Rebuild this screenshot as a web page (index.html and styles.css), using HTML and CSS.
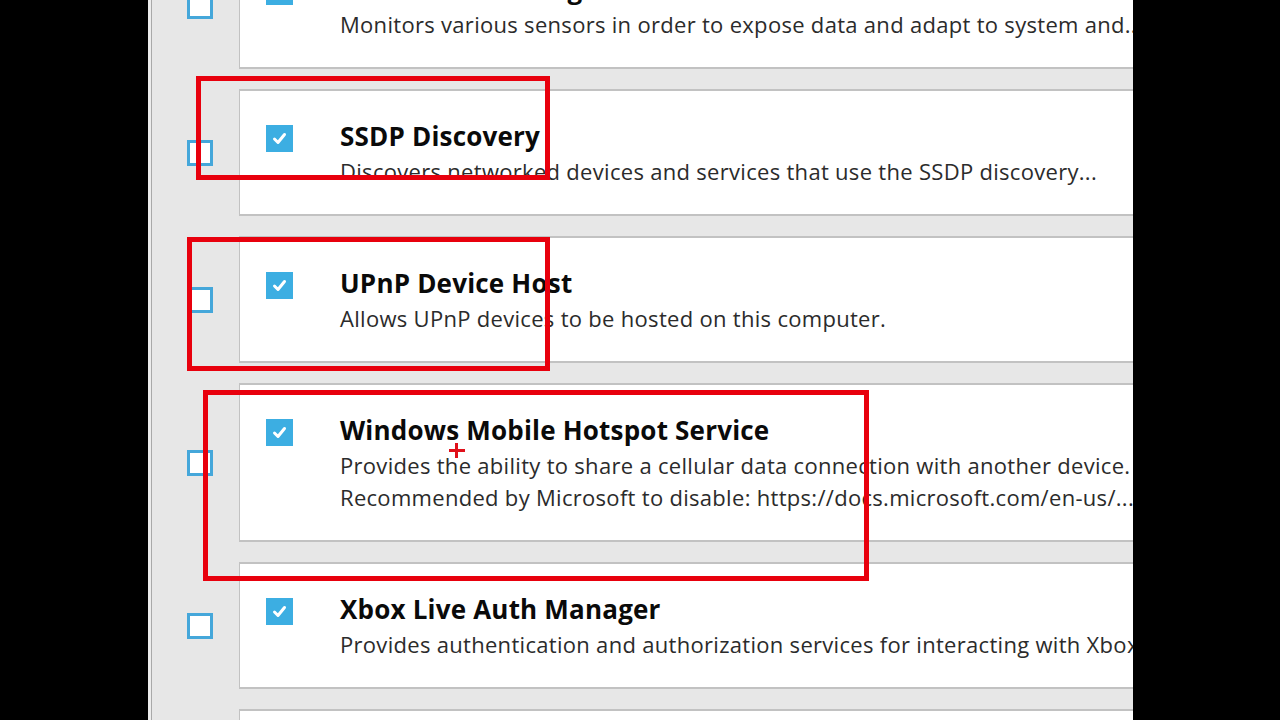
FILE: index.html
```html
<!DOCTYPE html>
<html lang="en">
<head>
<meta charset="utf-8">
<title>Services</title>
<link rel="stylesheet" href="styles.css">
</head>
<body>
<div class="frame">
  <div class="list">
    <div class="row">
      <div class="sel"><span class="box"></span></div>
      <div class="card">
        <span class="chk"><svg viewBox="0 0 27 27" width="27" height="27"><path d="M8.5 14 L12 17.5 L18.5 9.5" fill="none" stroke="#fff" stroke-width="3" stroke-linecap="round" stroke-linejoin="round"/></svg></span>
        <div class="txt">
          <div class="title">Sensor Monitoring Service</div>
          <div class="desc">Monitors various sensors in order to expose data and adapt to system and...</div>
        </div>
      </div>
    </div>
    <div class="row">
      <div class="sel"><span class="box"></span></div>
      <div class="card">
        <span class="chk"><svg viewBox="0 0 27 27" width="27" height="27"><path d="M8.5 14 L12 17.5 L18.5 9.5" fill="none" stroke="#fff" stroke-width="3" stroke-linecap="round" stroke-linejoin="round"/></svg></span>
        <div class="txt">
          <div class="title">SSDP Discovery</div>
          <div class="desc">Discovers networked devices and services that use the SSDP discovery...</div>
        </div>
      </div>
    </div>
    <div class="row">
      <div class="sel"><span class="box"></span></div>
      <div class="card">
        <span class="chk"><svg viewBox="0 0 27 27" width="27" height="27"><path d="M8.5 14 L12 17.5 L18.5 9.5" fill="none" stroke="#fff" stroke-width="3" stroke-linecap="round" stroke-linejoin="round"/></svg></span>
        <div class="txt">
          <div class="title">UPnP Device Host</div>
          <div class="desc">Allows UPnP devices to be hosted on this computer.</div>
        </div>
      </div>
    </div>
    <div class="row">
      <div class="sel"><span class="box"></span></div>
      <div class="card">
        <span class="chk"><svg viewBox="0 0 27 27" width="27" height="27"><path d="M8.5 14 L12 17.5 L18.5 9.5" fill="none" stroke="#fff" stroke-width="3" stroke-linecap="round" stroke-linejoin="round"/></svg></span>
        <div class="txt">
          <div class="title">Windows Mobile Hotspot Service</div>
          <div class="desc">Provides the ability to share a cellular data connection with another device.</div>
          <div class="desc">Recommended by Microsoft to disable: https://docs.microsoft.com/en-us/...</div>
        </div>
      </div>
    </div>
    <div class="row">
      <div class="sel"><span class="box"></span></div>
      <div class="card">
        <span class="chk"><svg viewBox="0 0 27 27" width="27" height="27"><path d="M8.5 14 L12 17.5 L18.5 9.5" fill="none" stroke="#fff" stroke-width="3" stroke-linecap="round" stroke-linejoin="round"/></svg></span>
        <div class="txt">
          <div class="title">Xbox Live Auth Manager</div>
          <div class="desc">Provides authentication and authorization services for interacting with Xbox Live...</div>
        </div>
      </div>
    </div>
    <div class="row">
      <div class="sel"></div>
      <div class="card card-empty"></div>
    </div>
  </div>
</div>

<div class="mark mark-1"></div>
<div class="mark mark-2"></div>
<div class="mark mark-3"></div>
<div class="cross"></div>
</body>
</html>
```

FILE: styles.css
```css
html, body {
  margin: 0;
  padding: 0;
  background: #000;
  height: 720px;
  overflow: hidden;
}

body {
  font-family: "Open Sans", "Noto Sans", "Liberation Sans", sans-serif;
}

.frame {
  margin-left: 148px;
  width: 982px;
  height: 720px;
  overflow: hidden;
  background: #e7e7e7;
  border-left: 3px solid #ececec;
  box-shadow: inset 1px 0 0 #a9a9a9;
}

.list {
  display: flex;
  flex-direction: column;
  gap: 20px;
  margin-top: -58px;
}

.row {
  display: flex;
  align-items: center;
}

.sel {
  width: 88px;
  flex: none;
  display: flex;
  align-items: center;
}

.box {
  display: block;
  width: 20px;
  height: 20px;
  margin-left: 36px;
  border: 3px solid #45a7da;
  background: #fff;
}

.card {
  flex: none;
  width: 1000px;
  box-sizing: border-box;
  background: #fff;
  border: 1px solid #c2c2c2;
  border-top-width: 2px;
  border-bottom-width: 2px;
  display: flex;
  align-items: flex-start;
  padding: 29px 0 27px;
}

.card-empty {
  height: 127px;
}

.chk {
  flex: none;
  display: block;
  width: 27px;
  height: 27px;
  margin-left: 26px;
  margin-top: 5px;
  background: #3caee2;
}

.chk svg {
  display: block;
}

.txt {
  margin-left: 47px;
  white-space: nowrap;
}

.title {
  font-size: 26px;
  line-height: 32px;
  font-weight: 700;
  letter-spacing: 0.2px;
  color: #0a0a0a;
  margin-bottom: 3px;
}

.desc {
  font-size: 22px;
  line-height: 32px;
  letter-spacing: 0.3px;
  color: #2b2b2b;
}

.mark {
  position: absolute;
  border: 5px solid #e8000d;
  box-sizing: border-box;
}

.mark-1 { left: 196px; top: 76px; width: 354px; height: 104px; }
.mark-2 { left: 187px; top: 237px; width: 363px; height: 134px; }
.mark-3 { left: 203px; top: 390px; width: 666px; height: 191px; }

.cross {
  position: absolute;
  left: 449px;
  top: 443px;
  width: 16px;
  height: 15px;
}

.cross::before,
.cross::after {
  content: "";
  position: absolute;
  background: #e0101a;
}

.cross::before { left: 0; top: 6px; width: 16px; height: 3px; }
.cross::after { left: 6px; top: 0; width: 3px; height: 15px; }
```
